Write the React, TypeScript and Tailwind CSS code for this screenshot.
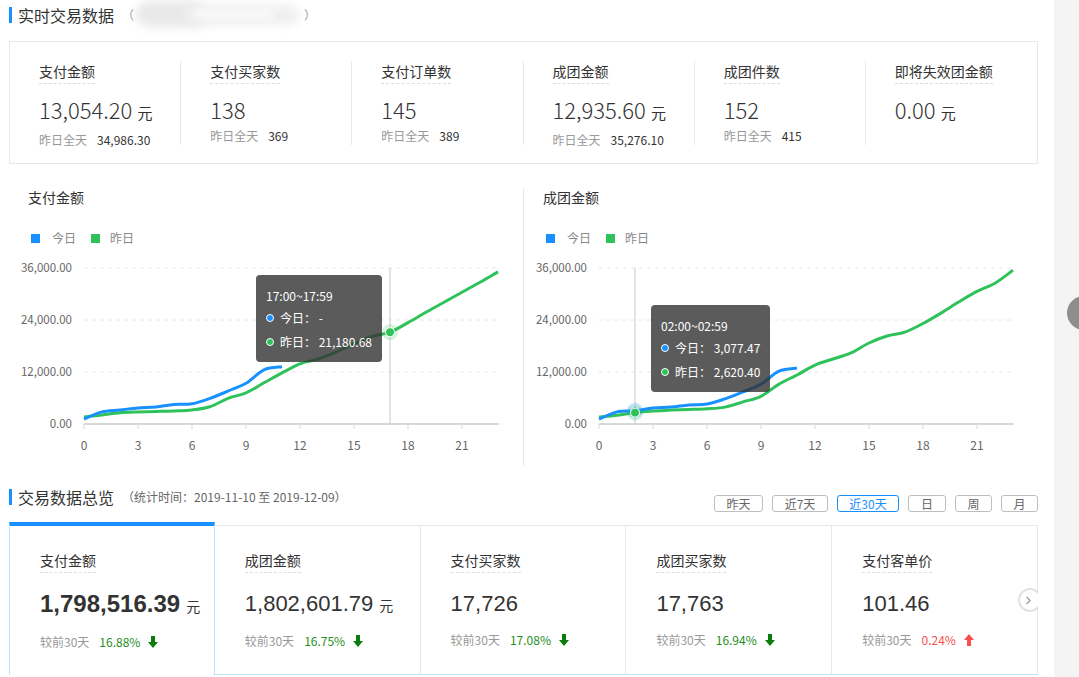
import React from 'react';
import { ChevronRight } from 'lucide-react';

const STEP = 18;
const X0 = 75;
const Y0 = 169;
const K = 156 / 36; // px per thousand

type Pt = [number, number];

const toPts = (vals: number[]): Pt[] => vals.map((v, i) => [X0 + i * STEP, Y0 - v * K]);

function smoothPath(p: Pt[]) {
  let d = `M${p[0][0]} ${p[0][1].toFixed(1)}`;
  for (let i = 0; i < p.length - 1; i++) {
    const a = p[i - 1] ?? p[i];
    const b = p[i];
    const c = p[i + 1];
    const e = p[i + 2] ?? c;
    const c1x = b[0] + (c[0] - a[0]) / 6;
    const c1y = b[1] + (c[1] - a[1]) / 6;
    const c2x = c[0] - (e[0] - b[0]) / 6;
    const c2y = c[1] - (e[1] - b[1]) / 6;
    d += ` C${c1x.toFixed(1)} ${c1y.toFixed(1)} ${c2x.toFixed(1)} ${c2y.toFixed(1)} ${c[0]} ${c[1].toFixed(1)}`;
  }
  return d;
}

const payToday = [1.15, 2.8, 3.25, 3.7, 3.95, 4.5, 4.65, 5.9, 7.6, 9.4, 12.5, 13.2];
const payYesterday = [1.6, 2.1, 2.6, 2.8, 2.9, 3.0, 3.25, 4.0, 5.9, 7.2, 9.5, 11.8, 13.9, 15.0, 16.6, 18.5, 20.2, 21.18, 23.4, 25.8, 28.1, 30.4, 32.7, 35.1];
const groupToday = [1.15, 2.8, 3.08, 3.7, 3.9, 4.4, 4.6, 5.8, 7.4, 9.2, 12.2, 12.9];
const groupYesterday = [1.6, 2.0, 2.62, 3.0, 3.2, 3.35, 3.5, 3.9, 5.1, 6.4, 9.2, 11.3, 13.6, 15.0, 16.4, 18.7, 20.3, 21.2, 23.2, 25.6, 28.2, 30.6, 32.5, 35.5];

const BLUE = '#1890ff';
const GREEN = '#2fc25b';

const topStats = [
  { label: '支付金额', value: '13,054.20', unit: '元', prev: '34,986.30' },
  { label: '支付买家数', value: '138', prev: '369' },
  { label: '支付订单数', value: '145', prev: '389' },
  { label: '成团金额', value: '12,935.60', unit: '元', prev: '35,276.10' },
  { label: '成团件数', value: '152', prev: '415' },
  { label: '即将失效团金额', value: '0.00', unit: '元' },
];

const overview = [
  { label: '支付金额', value: '1,798,516.39', unit: '元', pct: '16.88%', up: false },
  { label: '成团金额', value: '1,802,601.79', unit: '元', pct: '16.75%', up: false },
  { label: '支付买家数', value: '17,726', pct: '17.08%', up: false },
  { label: '成团买家数', value: '17,763', pct: '16.94%', up: false },
  { label: '支付客单价', value: '101.46', pct: '0.24%', up: true },
];

const ranges = [
  { t: '昨天', w: 'w-[49px]' },
  { t: '近7天', w: 'w-[56px]' },
  { t: '近30天', w: 'w-[62px]', active: true },
  { t: '日', w: 'w-[38px]' },
  { t: '周', w: 'w-[37px]' },
  { t: '月', w: 'w-[37px]' },
];

const Arrow = ({ up }: { up: boolean }) => (
  <svg width="10" height="12" viewBox="0 0 10 12" className="ml-[8px]">
    <path
      d={up ? 'M5 0 L10 6 H7 V12 H3 V6 H0 Z' : 'M3 0 H7 V6 H10 L5 12 L0 6 H3 Z'}
      fill={up ? '#f5504c' : '#0b7d0b'}
    />
  </svg>
);

type Tip = { time: string; today: string; yesterday: string };

function TrendChart({
  title,
  today,
  yesterday,
  hover,
  tip,
  tipClass,
  bordered,
}: {
  title: string;
  today: number[];
  yesterday: number[];
  hover: number;
  tip: Tip;
  tipClass: string;
  bordered?: boolean;
}) {
  const tp = toPts(today);
  const yp = toPts(yesterday);
  const hx = X0 + hover * STEP;
  const grid = [
    { y: 13, t: '36,000.00' },
    { y: 65, t: '24,000.00' },
    { y: 117, t: '12,000.00' },
  ];
  const ticks = [0, 3, 6, 9, 12, 15, 18, 21];
  return (
    <div className={`relative h-[278px] ${bordered ? 'w-[515px] border-r border-[#e8e8e8]' : 'w-[514px]'}`}>
      <div className="pl-[19px] text-[14px] leading-[18px] text-[#333]">{title}</div>
      <div className="mt-[25px] flex h-[14px] items-center pl-[22px] text-[12px] text-[#888]">
        <span className="h-[9px] w-[9px] bg-[#1890ff]" />
        <span className="ml-[12px]">今日</span>
        <span className="ml-[15px] h-[9px] w-[9px] bg-[#2fc25b]" />
        <span className="ml-[10px]">昨日</span>
      </div>
      <svg width="514" height="211" className="mt-[10px] block">
        {grid.map((g) => (
          <g key={g.t}>
            <line x1={X0} x2={490} y1={g.y} y2={g.y} stroke="#e6e6e6" strokeDasharray="4 4" />
            <text x={63} y={g.y + 4} textAnchor="end" fontSize="11.5" fill="#666">
              {g.t}
            </text>
          </g>
        ))}
        <text x={63} y={Y0 + 4} textAnchor="end" fontSize="11.5" fill="#666">
          0.00
        </text>
        <line x1={X0} x2={490} y1={Y0} y2={Y0} stroke="#d9d9d9" strokeWidth="2" />
        {ticks.map((h) => (
          <g key={h}>
            <line x1={X0 + h * STEP} x2={X0 + h * STEP} y1={Y0} y2={Y0 + 5} stroke="#d9d9d9" />
            <text x={X0 + h * STEP} y={Y0 + 26} textAnchor="middle" fontSize="12" fill="#666">
              {h}
            </text>
          </g>
        ))}
        <line x1={hx} x2={hx} y1={13} y2={Y0} stroke="#c8c8c8" />
        <path d={smoothPath(yp)} fill="none" stroke={GREEN} strokeWidth="3" strokeLinejoin="round" />
        <path d={smoothPath(tp)} fill="none" stroke={BLUE} strokeWidth="3" strokeLinejoin="round" />
        {hover < today.length && (
          <>
            <circle cx={hx} cy={tp[hover][1]} r="8" fill={BLUE} opacity="0.2" />
            <circle cx={hx} cy={tp[hover][1]} r="4" fill={BLUE} stroke="#fff" strokeWidth="1" />
          </>
        )}
        <circle cx={hx} cy={yp[hover][1]} r="8" fill={GREEN} opacity="0.2" />
        <circle cx={hx} cy={yp[hover][1]} r="4.5" fill={GREEN} stroke="#fff" strokeWidth="1" />
      </svg>
      <div
        className={`absolute ${tipClass} whitespace-nowrap rounded-[4px] bg-[rgba(50,50,50,0.8)] px-[10px] pt-[11px] pb-[8px] text-[12px] text-white`}
      >
        <div className="leading-[20px]">{tip.time}</div>
        <div className="flex items-center leading-[24px]">
          <span className="mr-[6px] h-[8px] w-[8px] rounded-full border border-white bg-[#1890ff]" />
          今日：&nbsp;{tip.today}
        </div>
        <div className="flex items-center leading-[24px]">
          <span className="mr-[6px] h-[8px] w-[8px] rounded-full border border-white bg-[#2fc25b]" />
          昨日：&nbsp;{tip.yesterday}
        </div>
      </div>
    </div>
  );
}

export default function App() {
  return (
    <div className="flex h-[677px] w-[1079px] overflow-hidden bg-white font-['Noto_Sans_CJK_SC','Microsoft_YaHei',sans-serif] text-[#333]">
      <main className="w-[1054px] shrink-0 pl-[9px] pr-[16px]">
        {/* 实时交易数据 */}
        <div className="mt-[5px] flex h-[20px] items-center">
          <span className="h-[16px] w-[3px] bg-[#1890ff]" />
          <span className="ml-[6px] text-[16px] leading-[20px] text-[#333]">实时交易数据</span>
          <span className="ml-[8px] text-[12px] text-[#999]">（</span>
          <span className="relative h-[20px] w-[170px]">
            <span className="absolute left-[2px] top-[-4px] h-[26px] w-[70px] rounded-full bg-[#e9e9e9] blur-[5px]" />
            <span className="absolute left-[50px] top-[0px] h-[20px] w-[115px] rounded-full bg-[#efefef] blur-[5px]" />
            <span className="absolute left-[60px] top-[3px] h-[12px] w-[80px] rounded-full bg-[#f8f8f8] blur-[3px]" />
          </span>
          <span className="text-[12px] text-[#999]">）</span>
        </div>

        <div className="mt-[16px] grid grid-cols-6 border border-[#e8e8e8] pt-[19px] pb-[18px]">
          {topStats.map((s, i) => (
            <div
              key={s.label}
              className={`flex h-[84px] flex-col items-start pl-[29px] ${i < 5 ? 'border-r border-[#e8e8e8]' : ''}`}
            >
              <span className="border-b border-dashed border-[#ddd] pb-[2px] text-[14px] leading-[20px] text-[#333]">
                {s.label}
              </span>
              <div className="mt-[11px] flex items-baseline leading-[28px]">
                <span className="text-[22px] font-light text-[#333]">{s.value}</span>
                {s.unit && <span className="ml-[5px] text-[15px] text-[#333]">{s.unit}</span>}
              </div>
              {s.prev && (
                <div className="mt-[5px] flex text-[12px] leading-[16px]">
                  <span className="text-[#999]">昨日全天</span>
                  <span className="ml-[10px] text-[#333]">{s.prev}</span>
                </div>
              )}
            </div>
          ))}
        </div>

        {/* charts */}
        <div className="mt-[24px] flex">
          <TrendChart
            title="支付金额"
            today={payToday}
            yesterday={payYesterday}
            hover={17}
            bordered
            tipClass="left-[247px] top-[87px]"
            tip={{ time: '17:00~17:59', today: '-', yesterday: '21,180.68' }}
          />
          <TrendChart
            title="成团金额"
            today={groupToday}
            yesterday={groupYesterday}
            hover={2}
            tipClass="left-[127px] top-[117px]"
            tip={{ time: '02:00~02:59', today: '3,077.47', yesterday: '2,620.40' }}
          />
        </div>

        {/* 交易数据总览 */}
        <div className="mt-[21px] flex items-start">
          <div className="flex h-[20px] items-center">
            <span className="h-[16px] w-[3px] bg-[#1890ff]" />
            <span className="ml-[6px] text-[16px] leading-[20px] text-[#333]">交易数据总览</span>
            <span className="ml-[8px] text-[12px] text-[#666]">（统计时间：2019-11-10 至 2019-12-09）</span>
          </div>
          <div className="ml-auto mt-[8px] flex gap-[9px]">
            {ranges.map((r) => (
              <span
                key={r.t}
                className={`flex h-[17px] items-center justify-center rounded-[3px] border text-[12px] leading-none ${r.w} ${
                  r.active ? 'border-[#1890ff] text-[#1890ff]' : 'border-[#bfbfbf] text-[#666]'
                }`}
              >
                {r.t}
              </span>
            ))}
          </div>
        </div>

        <div className="relative mt-[10px] grid grid-cols-5 overflow-hidden">
          {overview.map((c, i) => {
            const active = i === 0;
            return (
              <div
                key={c.label}
                className={`flex flex-col items-start pl-[30px] pt-[24px] pb-[25px] ${
                  active
                    ? 'border-x border-t-[4px] border-x-[#bde3fb] border-t-[#1890ff]'
                    : 'mt-[3px] border-t border-r border-b border-t-[#e8e8e8] border-r-[#e8e8e8] border-b-[#bde3fb]'
                }`}
              >
                <span className="border-b border-dashed border-[#ddd] pb-[2px] text-[14px] leading-[20px] text-[#333]">
                  {c.label}
                </span>
                <div className="mt-[16px] flex items-baseline leading-[30px]">
                  <span
                    className={`font-['Liberation_Sans',Arial,sans-serif] text-[#333] ${
                      active ? 'text-[24px] font-bold' : 'text-[22px]'
                    }`}
                  >
                    {c.value}
                  </span>
                  {c.unit && <span className="ml-[6px] text-[14px] text-[#333]">{c.unit}</span>}
                </div>
                <div className="mt-[13px] flex items-center text-[12px] leading-[16px]">
                  <span className="text-[#999]">较前30天</span>
                  <span className={`ml-[10px] ${c.up ? 'text-[#f5504c]' : 'text-[#1e8e1e]'}`}>{c.pct}</span>
                  <Arrow up={c.up} />
                </div>
              </div>
            );
          })}
          <div className="absolute right-[-4px] top-[66px] flex h-[24px] w-[24px] items-center justify-center rounded-full border-2 border-[#e2e2e2] bg-white">
            <ChevronRight size={13} color="#999" strokeWidth={2} className="-ml-[3px]" />
          </div>
        </div>
      </main>
      <aside className="relative flex-1 bg-[#f4f4f4]">
        <div className="absolute left-[13px] top-[296px] h-[34px] w-[34px] rounded-full bg-[#8e8e8e]" />
      </aside>
    </div>
  );
}
